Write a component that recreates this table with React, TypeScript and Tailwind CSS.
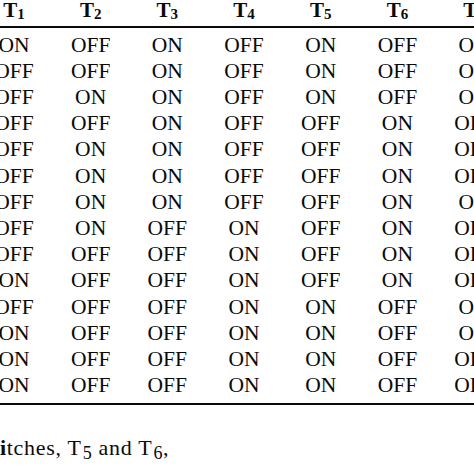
const headers = ["1", "2", "3", "4", "5", "6", "7"];

const rows = [
  ["ON", "OFF", "ON", "OFF", "ON", "OFF", "ON"],
  ["OFF", "OFF", "ON", "OFF", "ON", "OFF", "ON"],
  ["OFF", "ON", "ON", "OFF", "ON", "OFF", "ON"],
  ["OFF", "OFF", "ON", "OFF", "OFF", "ON", "OFF"],
  ["OFF", "ON", "ON", "OFF", "OFF", "ON", "OFF"],
  ["OFF", "ON", "ON", "OFF", "OFF", "ON", "OFF"],
  ["OFF", "ON", "ON", "OFF", "OFF", "ON", "ON"],
  ["OFF", "ON", "OFF", "ON", "OFF", "ON", "OFF"],
  ["OFF", "OFF", "OFF", "ON", "OFF", "ON", "OFF"],
  ["ON", "OFF", "OFF", "ON", "OFF", "ON", "OFF"],
  ["OFF", "OFF", "OFF", "ON", "ON", "OFF", "ON"],
  ["ON", "OFF", "OFF", "ON", "ON", "OFF", "ON"],
  ["ON", "OFF", "OFF", "ON", "ON", "OFF", "OFF"],
  ["ON", "OFF", "OFF", "ON", "ON", "OFF", "OFF"],
];

export default function App() {
  return (
    <div className="w-[474px] h-[474px] overflow-hidden bg-white text-[#0a0a0a] font-['Liberation_Serif',serif]">
      {/* header */}
      <div className="-ml-[24.4px] grid grid-cols-[repeat(7,76.7px)] h-[20px] text-[21px] leading-[20px] font-bold">
        {headers.map((n) => (
          <div key={n} className="text-center whitespace-nowrap">
            T<sub className="text-[15px] -bottom-[2px]">{n}</sub>
          </div>
        ))}
      </div>
      <div className="mt-[6px] h-[1.5px] bg-[#0a0a0a]" />

      {/* body */}
      <div className="mt-[4px] -ml-[24.4px] text-[21.5px] leading-[26.2px]">
        {rows.map((r, i) => (
          <div key={i} className="grid grid-cols-[repeat(7,76.7px)]">
            {r.map((v, j) => (
              <div key={j} className="text-center whitespace-nowrap">
                {v}
              </div>
            ))}
          </div>
        ))}
      </div>
      <div className="mt-[4.4px] h-[2px] bg-[#0a0a0a]" />

      {/* caption */}
      <p className="mt-[30px] text-[22px] leading-[26px] tracking-[0.7px] whitespace-nowrap">
        <span className="font-bold">i</span>tches, T
        <sub className="text-[18px] -bottom-[4px] ml-[1px]">5</sub> and T
        <sub className="text-[18px] -bottom-[4px] ml-[1px]">6</sub>,
      </p>
    </div>
  );
}
